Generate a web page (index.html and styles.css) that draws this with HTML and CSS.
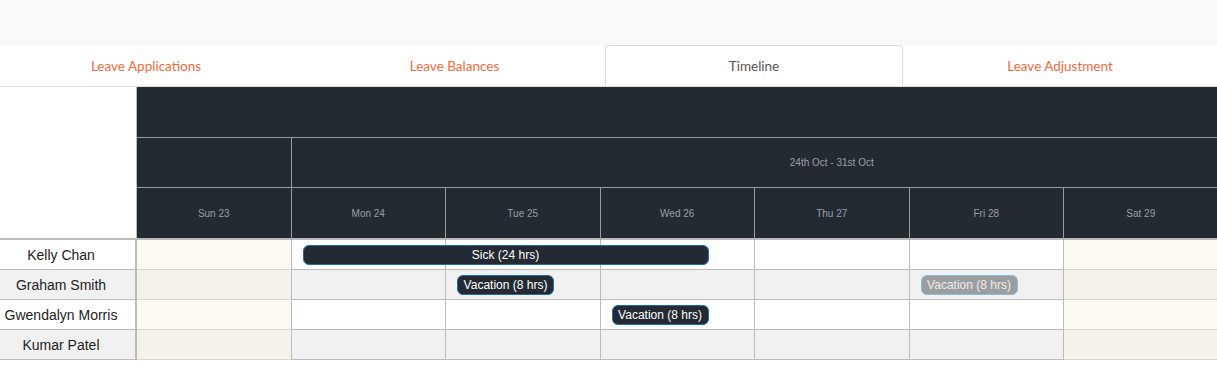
FILE: index.html
```html
<!DOCTYPE html>
<html>
<head>
    <title>Leave Timeline</title>
    <link rel="stylesheet" href="styles.css">
</head>
<body>
    <div class="top-band"></div>

    <div class="tabs">
        <div class="tab tab-apps">Leave Applications</div>
        <div class="tab tab-bal">Leave Balances</div>
        <div class="tab tab-time active">Timeline</div>
        <div class="tab tab-adj">Leave Adjustment</div>
    </div>

    <div class="timeline-wrap">
        <div class="timeline">
            <!-- header -->
            <div class="corner"></div>
            <div class="hd hd-top"></div>
            <div class="hd"></div>
            <div class="hd hd-week">24th Oct - 31st Oct</div>
            <div class="hd"></div>
            <div class="hd hd-day">Sun 23</div>
            <div class="hd hd-day">Mon 24</div>
            <div class="hd hd-day">Tue 25</div>
            <div class="hd hd-day">Wed 26</div>
            <div class="hd hd-day">Thu 27</div>
            <div class="hd hd-day">Fri 28</div>
            <div class="hd hd-day">Sat 29</div>
            <div class="hd hd-day">Sun 30</div>
            <div class="hd hd-day">Mon 31</div>

            <!-- Kelly Chan -->
            <div class="name">Kelly Chan</div>
            <div class="cell wkend"></div>
            <div class="cell">
                <div class="event" style="width: 406px;">Sick (24 hrs)</div>
            </div>
            <div class="cell"></div>
            <div class="cell"></div>
            <div class="cell"></div>
            <div class="cell"></div>
            <div class="cell wkend"></div>
            <div class="cell wkend"></div>
            <div class="cell"></div>

            <!-- Graham Smith -->
            <div class="name alt">Graham Smith</div>
            <div class="cell alt wkend"></div>
            <div class="cell alt"></div>
            <div class="cell alt">
                <div class="event" style="width: 97px;">Vacation (8 hrs)</div>
            </div>
            <div class="cell alt"></div>
            <div class="cell alt"></div>
            <div class="cell alt">
                <div class="event pending" style="width: 97px;">Vacation (8 hrs)</div>
            </div>
            <div class="cell alt wkend"></div>
            <div class="cell alt wkend"></div>
            <div class="cell alt"></div>

            <!-- Gwendalyn Morris -->
            <div class="name">Gwendalyn Morris</div>
            <div class="cell wkend"></div>
            <div class="cell"></div>
            <div class="cell"></div>
            <div class="cell">
                <div class="event" style="width: 97px;">Vacation (8 hrs)</div>
            </div>
            <div class="cell"></div>
            <div class="cell"></div>
            <div class="cell wkend"></div>
            <div class="cell wkend"></div>
            <div class="cell"></div>

            <!-- Kumar Patel -->
            <div class="name alt">Kumar Patel</div>
            <div class="cell alt wkend"></div>
            <div class="cell alt"></div>
            <div class="cell alt"></div>
            <div class="cell alt"></div>
            <div class="cell alt"></div>
            <div class="cell alt"></div>
            <div class="cell alt wkend"></div>
            <div class="cell alt wkend"></div>
            <div class="cell alt"></div>
        </div>
    </div>
</body>
</html>
```

FILE: styles.css
```css
body {
    margin: 0;
    background: #fff;
    font-family: "Liberation Sans", Arial, sans-serif;
}

.top-band {
    height: 45px;
    background-color: #f9f9f9;
}

/* tabs */
.tabs {
    display: flex;
    height: 41px;
    border-bottom: 1px solid #ddd;
    font-family: Lato, "Open Sans", sans-serif;
    font-size: 13.5px;
}
.tab {
    display: flex;
    align-items: center;
    justify-content: center;
    color: #f26a3c;
    box-sizing: border-box;
}
.tab-apps {
    flex: 0 0 292px;
}
.tab-bal {
    flex: 0 0 301px;
    margin-left: 12px;
}
.tab-time {
    flex: 0 0 298px;
}
.tab-adj {
    flex: 1;
}
.tab.active {
    color: #555;
    background: #fff;
    border: 1px solid #ddd;
    border-bottom: none;
    border-radius: 4px 4px 0 0;
}

/* timeline grid */
.timeline-wrap {
    overflow: hidden;
    width: 100%;
}
.timeline {
    display: grid;
    grid-template-columns: 137px repeat(9, 154.5px);
    grid-template-rows: 51px 50px 52px repeat(4, 30px);
    width: max-content;
}

.corner {
    grid-column: 1;
    grid-row: 1 / span 3;
    background: #fff;
    border-right: 1px solid #bbb;
    border-bottom: 2px solid #bbb;
}

.hd {
    background-color: #242a32;
    color: #9a9ea3;
    font-size: 10px;
    display: flex;
    align-items: center;
    justify-content: center;
    border-bottom: 1px solid #999;
    border-right: 1px solid #999;
    box-sizing: border-box;
}
.hd-top {
    grid-column: 2 / span 9;
}
.hd-week {
    grid-column: 3 / span 7;
}
.hd-day {
    border-bottom: 2px solid #bbb;
}

.name {
    display: flex;
    align-items: center;
    justify-content: center;
    font-size: 14px;
    color: #222;
    background: #fff;
    border-right: 2px solid #bbb;
    border-bottom: 1px solid #bbb;
    box-sizing: border-box;
    padding: 0 13px 0 0;
}
.cell {
    position: relative;
    background: #fff;
    border-right: 1px solid #bbb;
    border-bottom: 1px solid #bbb;
    box-sizing: border-box;
}
.alt {
    background: #f1f1f1;
}
.cell.wkend {
    background: #fcf9f1;
    border-bottom-color: #ddd8cf;
}
.cell.alt.wkend {
    background: #f5f2eb;
}

/* leave events, laid over the day cells */
.event {
    position: absolute;
    z-index: 1;
    top: 5px;
    left: 11px;
    height: 20px;
    box-sizing: border-box;
    background: #232a33;
    border: 1px solid #1d6ea8;
    border-radius: 6px;
    color: #fff;
    font-size: 12px;
    line-height: 18px;
    text-align: center;
    white-space: nowrap;
}
.event.pending {
    background: #9b9d9f;
    border-color: #8dbbdb;
    color: #eee;
}
```
